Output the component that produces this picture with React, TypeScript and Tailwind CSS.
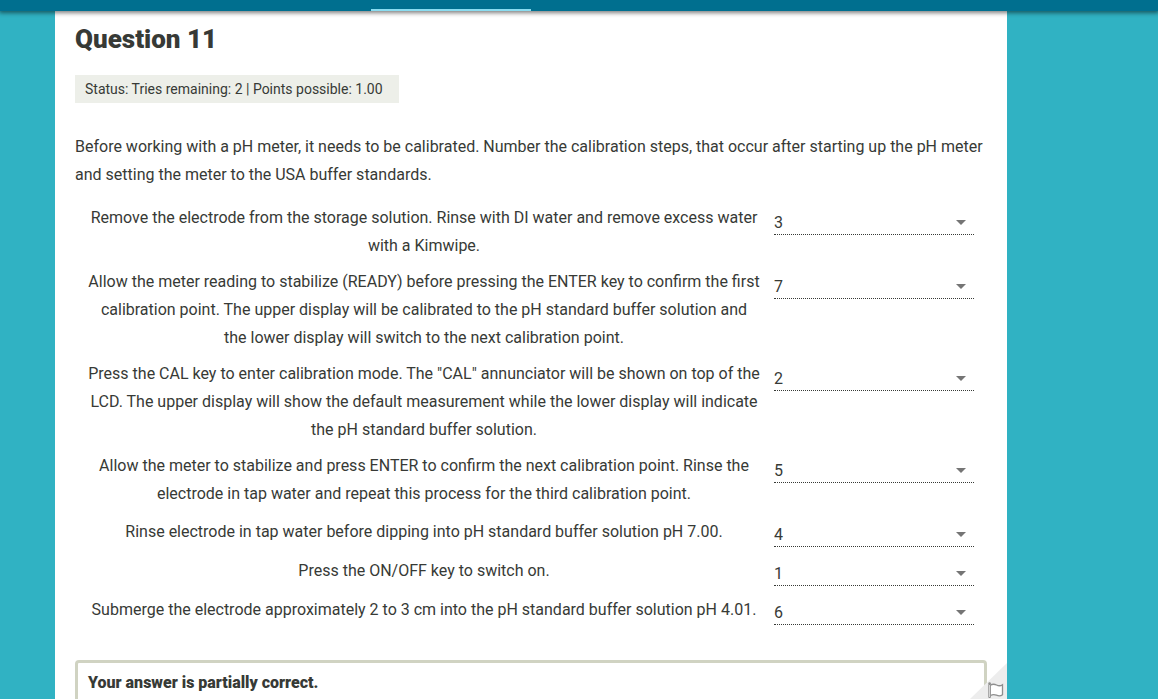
type Step = {
  id: string;
  text: string;
  answer: string;
};

const steps: Step[] = [
  {
    id: "remove",
    text: "Remove the electrode from the storage solution. Rinse with DI water and remove excess water with a Kimwipe.",
    answer: "3"
  },
  {
    id: "ready",
    text: "Allow the meter reading to stabilize (READY) before pressing the ENTER key to confirm the first calibration point. The upper display will be calibrated to the pH standard buffer solution and the lower display will switch to the next calibration point.",
    answer: "7"
  },
  {
    id: "cal",
    text: 'Press the CAL key to enter calibration mode. The "CAL" annunciator will be shown on top of the LCD. The upper display will show the default measurement while the lower display will indicate the pH standard buffer solution.',
    answer: "2"
  },
  {
    id: "confirm",
    text: "Allow the meter to stabilize and press ENTER to confirm the next calibration point. Rinse the electrode in tap water and repeat this process for the third calibration point.",
    answer: "5"
  },
  { id: "rinse", text: "Rinse electrode in tap water before dipping into pH standard buffer solution pH 7.00.", answer: "4" },
  { id: "power", text: "Press the ON/OFF key to switch on.", answer: "1" },
  {
    id: "submerge",
    text: "Submerge the electrode approximately 2 to 3 cm into the pH standard buffer solution pH 4.01.",
    answer: "6"
  }
];

const choices = ["1", "2", "3", "4", "5", "6", "7"];

export default function App() {
  return (
    <div className="flex h-screen flex-col overflow-hidden bg-[#30b2c3] font-[Roboto,sans-serif] text-[#373a36]">
      <header className="z-10 flex h-[11px] shrink-0 items-end bg-[#006f8f] shadow-[0_1px_4px_1px_rgba(0,0,0,0.5)]">
        <div className="ml-[371px] h-[2px] w-40 bg-[#8adcf0]" />
      </header>

      <main className="relative mr-[151px] ml-[55px] flex-1 overflow-hidden bg-white px-5">
        <h1 className="mt-3 text-[26px] leading-8 font-black">Question 11</h1>
        <div className="mt-5 flex">
          <p className="bg-[#edefe9] pr-4 pl-[10px] text-sm leading-7">Status: Tries remaining: 2 | Points possible: 1.00</p>
        </div>
        <p className="mt-[30px] text-base leading-7">
          Before working with a pH meter, it needs to be calibrated. Number the calibration steps, that occur after starting up the pH
          meter and setting the meter to the USA buffer standards.
        </p>

        <div className="mt-[11px] px-[13px]">
          {steps.map((step) => (
            <StepRow key={step.id} step={step} />
          ))}
        </div>

        <section className="mt-[31px] h-32 rounded-[4px] border-[3px] border-[#d0d3c2] px-[10px] pt-1">
          <p className="text-base leading-8 font-black">Your answer is partially correct.</p>
        </section>

        <FlagCorner />
      </main>
    </div>
  );
}

function StepRow({ step }: { step: Step }) {
  return (
    <div className="flex items-start gap-[14px] py-1">
      <label htmlFor={step.id} className="min-w-0 flex-1 self-center text-center text-base leading-7">
        {step.text}
      </label>
      <div className="relative -mt-px w-[200px] shrink-0">
        <select
          id={step.id}
          defaultValue={step.answer}
          className="block h-8 w-full appearance-none rounded-none border-b border-dotted border-[#373a36] bg-transparent pt-2 text-base leading-6 outline-none"
        >
          {choices.map((choice) => (
            <option key={choice} value={choice}>
              {choice}
            </option>
          ))}
        </select>
        <svg viewBox="0 0 10 5" className="pointer-events-none absolute top-[17px] right-2 h-[5px] w-[10px]" aria-hidden="true">
          <path d="M0 0h10L5 5z" fill="#757575" />
        </svg>
      </div>
    </div>
  );
}

function FlagCorner() {
  return (
    <button type="button" aria-label="Flag question" className="absolute right-0 bottom-0 h-9 w-[37px]">
      <svg viewBox="0 0 37 36" className="h-9 w-[37px]">
        <path d="M0 36L37 0v36z" fill="#ededed" />
        <path
          d="M20 22.500c2.500-1.800 4.500-1.500 6.500-.5s4 1.200 6-.3v10c-2 1.500-4 1.300-6 .5s-4-.8-6 .3"
          fill="#fff"
          stroke="#8e8e8e"
          strokeWidth="1.300"
        />
        <path d="M18.800 21.500h1.600v13h-1.600z" fill="#fff" stroke="#8e8e8e" strokeWidth="1" />
        <circle cx="19.600" cy="20.500" r="1.300" fill="#8e8e8e" />
      </svg>
    </button>
  );
}
